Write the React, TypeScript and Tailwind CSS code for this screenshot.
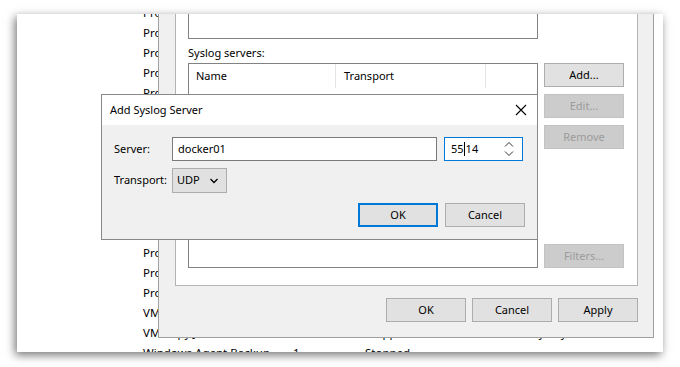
import React from "react";

// rows of the list window behind; the ones under the modal are not visible
const behindRows = [
  "Pro", "Pro", "Pro", "Pro", "Pro", "", "", "", "", "", "", "", "Pro", "Pro", "Pro", "VM",
];

function Btn({
  children,
  disabled,
  focused,
  className = "",
}: {
  children: React.ReactNode;
  disabled?: boolean;
  focused?: boolean;
  className?: string;
}) {
  return (
    <div
      className={[
        "flex h-[24px] w-[80px] items-center justify-center",
        disabled
          ? "border border-[#c2c2c2] bg-[#cccccc] text-[#9b9b9b]"
          : focused
            ? "border-2 border-[#0078d7] bg-[#e1e1e1] text-black"
            : "border border-[#adadad] bg-[#e1e1e1] text-black",
        className,
      ].join(" ")}
    >
      {children}
    </div>
  );
}

export default function App() {
  return (
    <div className="relative h-[367px] w-[680px] overflow-hidden bg-white font-['Noto_Sans',sans-serif] text-[11px] text-black">
      <div className="absolute left-[17px] top-[14px] h-[338px] w-[646px] overflow-hidden bg-white shadow-[-2px_3px_9px_rgba(0,0,0,0.55)]">
        {/* background list window, clipped by the properties window */}
        <div className="mt-[-11px] flex flex-col pl-[126px] text-[11.5px]">
          {behindRows.map((name, i) => (
            <div key={i} className="h-[20px] w-[15px] overflow-hidden whitespace-nowrap leading-[20px]">
              {name}
            </div>
          ))}
          <div className="flex h-[20px] items-center whitespace-nowrap leading-[20px]">
            <span className="w-[150px]">VM Copy Job 2</span>
            <span className="w-[72px]">1</span>
            <span className="w-[150px]">Stopped</span>
            <span>Every day</span>
          </div>
          <div className="flex h-[20px] items-center whitespace-nowrap leading-[20px]">
            <span className="w-[150px]">Windows Agent Backup</span>
            <span className="w-[72px]">1</span>
            <span className="w-[150px]">Stopped</span>
          </div>
        </div>

        {/* properties window */}
        <div className="absolute left-[141px] top-[-30px] flex h-[354px] w-[496px] flex-col border border-[#a0a0a0] bg-[#f0f0f0] pl-[16px] pr-[15px]">
          <div className="flex h-[301px] flex-col border border-[#b4b4b4] bg-white pl-[12px] pr-[13px]">
            <div className="h-[53px] w-[350px] border border-t-0 border-[#828282]" />
            <div className="mt-[6px] h-[16px] leading-[16px]">Syslog servers:</div>
            <div className="mt-[2px] flex">
              <div className="flex h-[205px] w-[350px] flex-col border border-[#828282] bg-white">
                <div className="flex h-[24px] items-center">
                  <div className="flex h-full w-[147px] items-center border-r border-[#e5e5e5] pl-[7px]">
                    Name
                  </div>
                  <div className="flex h-full w-[150px] items-center border-r border-[#e5e5e5] pl-[8px]">
                    Transport
                  </div>
                </div>
              </div>
              <div className="ml-[6px] flex h-[205px] flex-col gap-[7px]">
                <Btn>Add...</Btn>
                <Btn disabled>Edit...</Btn>
                <Btn disabled>Remove</Btn>
                <Btn disabled className="mt-auto">
                  Filters...
                </Btn>
              </div>
            </div>
          </div>
          <div className="mt-[12px] flex justify-end gap-[6px]">
            <Btn>OK</Btn>
            <Btn>Cancel</Btn>
            <Btn>Apply</Btn>
          </div>
        </div>

        {/* Add Syslog Server modal */}
        <div className="absolute left-[84px] top-[80px] flex h-[146px] w-[437px] flex-col border border-[#888888] bg-[#f0f0f0]">
          <div className="flex h-[30px] items-center justify-between bg-white pl-[8px] pr-[10px]">
            <span>Add Syslog Server</span>
            <svg width="12" height="12" viewBox="0 0 12 12">
              <path d="M1 1L11 11M11 1L1 11" stroke="#000" strokeWidth="1.1" fill="none" />
            </svg>
          </div>
          <div className="flex flex-col pl-[12px] pt-[12px]">
            <div className="flex items-center">
              <span className="w-[58px]">Server:</span>
              <div className="flex h-[24px] w-[265px] items-center border border-[#7a7a7a] bg-white pl-[5px]">
                docker01
              </div>
              <div className="ml-[7px] flex h-[24px] w-[79px] items-center border border-[#0078d7] bg-white pl-[6px] pr-[8px]">
                <span>55</span>
                <span className="mx-[0.5px] h-[14px] w-px bg-black" />
                <span>14</span>
                <svg width="10" height="20" viewBox="0 0 10 20" className="ml-auto">
                  <path d="M1 7.5L5 3.5L9 7.5M1 12.5L5 16.5L9 12.5" stroke="#333" strokeWidth="1" fill="none" />
                </svg>
              </div>
            </div>
            <div className="mt-[7px] flex items-center">
              <span className="w-[58px]">Transport:</span>
              <div className="flex h-[25px] w-[55px] items-center border border-[#adadad] bg-[#e1e1e1] pl-[4px]">
                <span>UDP</span>
                <svg width="10" height="8" viewBox="0 0 10 8" className="ml-[9px]">
                  <path d="M1.5 2L5 5.5L8.5 2" stroke="#000" strokeWidth="1.3" fill="none" />
                </svg>
              </div>
            </div>
            <div className="mt-[10px] flex gap-[7px] pl-[244px]">
              <Btn focused className="w-[79px]">
                OK
              </Btn>
              <Btn className="w-[79px]">Cancel</Btn>
            </div>
          </div>
        </div>
      </div>
    </div>
  );
}
